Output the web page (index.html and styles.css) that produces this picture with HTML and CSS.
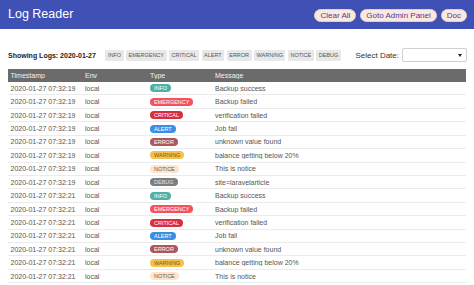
FILE: index.html
```html
<!DOCTYPE html>
<html lang="en">
<head>
<meta charset="utf-8">
<title>Log Reader</title>
<link rel="stylesheet" href="styles.css">
</head>
<body>
<header class="topbar">
  <h1 class="brand">Log Reader</h1>
  <nav class="actions">
    <button class="pill-btn">Clear All</button>
    <button class="pill-btn">Goto Admin Panel</button>
    <button class="pill-btn">Doc</button>
  </nav>
</header>
<main class="content">
  <div class="toolbar">
    <span class="showing">Showing Logs: 2020-01-27</span>
    <div class="filters">
      <span class="filter">INFO</span>
      <span class="filter">EMERGENCY</span>
      <span class="filter">CRITICAL</span>
      <span class="filter">ALERT</span>
      <span class="filter">ERROR</span>
      <span class="filter">WARNING</span>
      <span class="filter">NOTICE</span>
      <span class="filter">DEBUG</span>
    </div>
    <div class="date-pick">
      <span class="date-label">Select Date:</span>
      <div class="select"><span class="caret"></span></div>
    </div>
  </div>
  <div class="log-table">
    <div class="row head">
      <div class="cell">Timestamp</div>
      <div class="cell">Env</div>
      <div class="cell">Type</div>
      <div class="cell">Message</div>
    </div>
    <div class="row"><div class="cell">2020-01-27 07:32:19</div><div class="cell">local</div><div class="cell"><span class="badge info">INFO</span></div><div class="cell">Backup success</div></div>
    <div class="row"><div class="cell">2020-01-27 07:32:19</div><div class="cell">local</div><div class="cell"><span class="badge emergency">EMERGENCY</span></div><div class="cell">Backup failed</div></div>
    <div class="row"><div class="cell">2020-01-27 07:32:19</div><div class="cell">local</div><div class="cell"><span class="badge critical">CRITICAL</span></div><div class="cell">verification failed</div></div>
    <div class="row"><div class="cell">2020-01-27 07:32:19</div><div class="cell">local</div><div class="cell"><span class="badge alert">ALERT</span></div><div class="cell">Job fail</div></div>
    <div class="row"><div class="cell">2020-01-27 07:32:19</div><div class="cell">local</div><div class="cell"><span class="badge error">ERROR</span></div><div class="cell">unknown value found</div></div>
    <div class="row"><div class="cell">2020-01-27 07:32:19</div><div class="cell">local</div><div class="cell"><span class="badge warning">WARNING</span></div><div class="cell">balance getting below 20%</div></div>
    <div class="row"><div class="cell">2020-01-27 07:32:19</div><div class="cell">local</div><div class="cell"><span class="badge notice">NOTICE</span></div><div class="cell">This is notice</div></div>
    <div class="row"><div class="cell">2020-01-27 07:32:19</div><div class="cell">local</div><div class="cell"><span class="badge debug">DEBUG</span></div><div class="cell">site=laravelarticle</div></div>
    <div class="row"><div class="cell">2020-01-27 07:32:21</div><div class="cell">local</div><div class="cell"><span class="badge info">INFO</span></div><div class="cell">Backup success</div></div>
    <div class="row"><div class="cell">2020-01-27 07:32:21</div><div class="cell">local</div><div class="cell"><span class="badge emergency">EMERGENCY</span></div><div class="cell">Backup failed</div></div>
    <div class="row"><div class="cell">2020-01-27 07:32:21</div><div class="cell">local</div><div class="cell"><span class="badge critical">CRITICAL</span></div><div class="cell">verification failed</div></div>
    <div class="row"><div class="cell">2020-01-27 07:32:21</div><div class="cell">local</div><div class="cell"><span class="badge alert">ALERT</span></div><div class="cell">Job fail</div></div>
    <div class="row"><div class="cell">2020-01-27 07:32:21</div><div class="cell">local</div><div class="cell"><span class="badge error">ERROR</span></div><div class="cell">unknown value found</div></div>
    <div class="row"><div class="cell">2020-01-27 07:32:21</div><div class="cell">local</div><div class="cell"><span class="badge warning">WARNING</span></div><div class="cell">balance getting below 20%</div></div>
    <div class="row"><div class="cell">2020-01-27 07:32:21</div><div class="cell">local</div><div class="cell"><span class="badge notice">NOTICE</span></div><div class="cell">This is notice</div></div>
  </div>
</main>
</body>
</html>
```
FILE: styles.css
```css
html, body {
  margin: 0;
  padding: 0;
  overflow: hidden;
  background: #ffffff;
}
body {
  font-family: "Liberation Sans", Arial, sans-serif;
  color: #555;
}
.topbar {
  height: 29px;
  background: #3f51b5;
  display: flex;
  align-items: center;
  justify-content: space-between;
  padding: 0 7px 0 8px;
  box-sizing: border-box;
}
.brand {
  margin: 0;
  font-size: 12.5px;
  font-weight: normal;
  color: #ffffff;
  line-height: 1;
}
.actions {
  display: flex;
  gap: 4px;
  padding-top: 1px;
}
.pill-btn {
  font-family: "Liberation Sans", Arial, sans-serif;
  font-size: 8px;
  height: 13px;
  line-height: 11px;
  padding: 0 5px;
  margin: 0;
  border: 1px solid #e9cfc0;
  border-radius: 7px;
  background: #fbe9df;
  color: #4f3a9e;
}
.content {
  padding: 0 8px;
}
.toolbar {
  display: flex;
  align-items: center;
  margin-top: 19px;
  height: 14px;
}
.showing {
  font-size: 7px;
  font-weight: bold;
  color: #222;
}
.filters {
  display: flex;
  gap: 2.5px;
  margin-left: 9.5px;
}
.filter {
  font-size: 5.5px;
  height: 11px;
  line-height: 11px;
  padding: 0 2.5px;
  background: #e8e8e8;
  color: #555;
  border-radius: 1px;
}
.date-pick {
  margin-left: auto;
  display: flex;
  align-items: center;
  margin-right: -1px;
}
.date-label {
  font-size: 8px;
  color: #333;
  margin-right: 3px;
}
.select {
  width: 65px;
  height: 14px;
  box-sizing: border-box;
  border: 1px solid #d0d0d0;
  border-radius: 2px;
  background: #fff;
  display: flex;
  align-items: center;
  justify-content: flex-end;
  padding-right: 4px;
}
.caret {
  width: 0;
  height: 0;
  border-left: 2px solid transparent;
  border-right: 2px solid transparent;
  border-top: 3px solid #222;
}
.log-table {
  margin-top: 7px;
  font-size: 7px;
}
.row {
  display: grid;
  grid-template-columns: 74px 65px 65px 1fr;
  height: 13.43px;
  align-items: center;
  border-bottom: 1px solid #ebebeb;
  box-sizing: border-box;
}
.row.head {
  height: 13px;
  background: #6b6b6b;
  color: #f2f2f2;
  border-bottom: none;
}
.cell {
  padding-left: 3px;
  white-space: nowrap;
  overflow: hidden;
}
.row.head .cell:first-child,
.row .cell:first-child {
  padding-left: 2.5px;
}
.badge {
  display: inline-block;
  font-size: 5.5px;
  height: 8px;
  line-height: 8px;
  padding: 0 4px;
  border-radius: 4px;
  color: #fff;
  vertical-align: middle;
}
.badge.info { background: #4fb0a8; }
.badge.emergency { background: #f2545b; }
.badge.critical { background: #d7303c; }
.badge.alert { background: #3a8ee6; }
.badge.error { background: #b0565a; }
.badge.warning { background: #f4c04e; color: #7a5a12; }
.badge.notice { background: #fde4cc; color: #6d5a4a; }
.badge.debug { background: #7d7d7d; color: #e2e2e2; }
```
